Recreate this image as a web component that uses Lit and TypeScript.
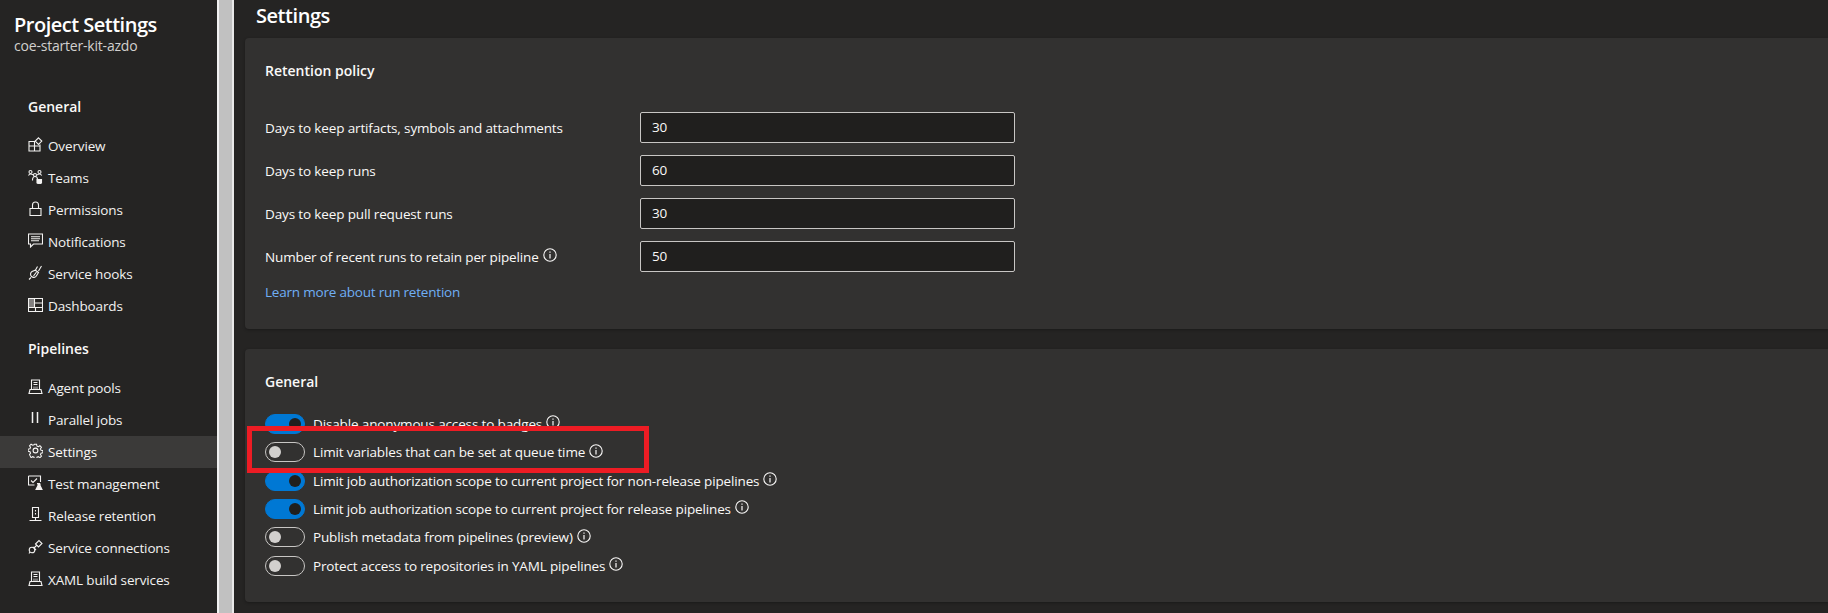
import { LitElement, html, css, svg } from "lit";
import { customElement } from "lit/decorators.js";

const icons: Record<string, unknown> = {
  overview: svg`<path d="M1 4.500h5.500v4.500H1zM1 9h5.500v5H1zM6.500 9H12v5H6.500zM6.500 5.500V9M12 7.500V9"/><path d="M10.500 .8l3.300 3.300-3.300 3.300-3.300-3.300z"/>`,
  teams: svg`<circle cx="2.500" cy="3" r="1.500"/><circle cx="11.500" cy="3" r="1.500"/><circle cx="7" cy="6" r="1.500"/><path d="M.5 6.500c.5-1 1-1.500 2-1.500s2 .5 3 1M9 6c.8-.5 1.500-1 2.500-1s1.600.5 2.200 1.500M4.500 11.500c0-2 1-4 2.500-4s2.500 1.500 2.500 3"/><path d="M9 10.500h4.500V14l-2.200 1L9 14z" fill="currentColor"/>`,
  lock: svg`<path d="M2 7.500h11v7H2zM4.500 7.500V4a3 3 0 0 1 6 0v3.500"/>`,
  chat: svg`<path d="M.5 1h14v10H5.500l-3 3v-3h-2z"/><path d="M3 3.800h9M3 5.800h9M3 7.800h8"/>`,
  hook: svg`<path d="M4 6.500a3.200 3.200 0 1 0 4.500 4.300l2-3.300-3.200-2.300z"/><path d="M1 14.500l2-2M10.500 6l3-5M7.500 5l2-3.500M5.500 11l3-4"/>`,
  dash: svg`<path d="M.5 1.500h14v13H.5zM6.500 1.500v9M.5 10.500h14M7.500 10.500v4M6.500 6h8"/><path d="M1 2h5.500v8.500H1z" fill="currentColor" fill-opacity=".45" stroke="none"/>`,
  agent: svg`<path d="M3.500 1h8v9.500h-8zM5.500 3.500h4M5.500 5.500h4M1 14.500l1-4h11l1 4z"/><path d="M5 7.500h5v3H5z" fill="currentColor" fill-opacity=".4" stroke="none"/>`,
  parallel: svg`<path d="M4.500 1v11M9.500 1v11" stroke-width="1.500"/>`,
  gear: svg`<circle cx="7.500" cy="7.500" r="2.400"/><path d="M6.300.8h2.400l.4 2 1.500.6 1.700-1.100 1.700 1.700-1.100 1.700.6 1.500 2 .4v2.400l-2 .4-.6 1.500 1.100 1.700-1.700 1.700-1.700-1.100-1.500.6-.4 2H6.300l-.4-2-1.500-.6-1.700 1.100L1 12l1.100-1.700-.6-1.500-2-.4V6l2-.4.6-1.500L1 2.400 2.700.7l1.700 1.100 1.500-.6z" transform="translate(.6 .6) scale(.92)"/>`,
  test: svg`<path d="M.5 1h12v6M.5 1v9h6"/><path d="M3 5.500l2 2 4-4"/><path d="M9 8.500h3M10 8.500v2L8 14.500h6l-2-4v-2" fill="currentColor"/>`,
  release: svg`<path d="M4.500 .5h6v10h-6zM7.500 3v1.500M7.500 6v1.500M1.500 13.500h12M7.500 10.500v3"/>`,
  conn: svg`<circle cx="4" cy="11" r="2.800"/><path d="M6 9l3-3M1 14.500l1-1.500"/><path d="M7.500 5l3.500-3.500 3 3L10.500 8z"/><path d="M5 8l3 3"/>`,
};

const general = [
  ["overview", "Overview"], ["teams", "Teams"], ["lock", "Permissions"],
  ["chat", "Notifications"], ["hook", "Service hooks"], ["dash", "Dashboards"],
];
const pipelines = [
  ["agent", "Agent pools"], ["parallel", "Parallel jobs"], ["gear", "Settings"],
  ["test", "Test management"], ["release", "Release retention"],
  ["conn", "Service connections"], ["agent", "XAML build services"],
];
const retention: [string, string, boolean][] = [
  ["Days to keep artifacts, symbols and attachments", "30", false],
  ["Days to keep runs", "60", false],
  ["Days to keep pull request runs", "30", false],
  ["Number of recent runs to retain per pipeline", "50", true],
];
const toggles: [string, boolean][] = [
  ["Disable anonymous access to badges", true],
  ["Limit variables that can be set at queue time", false],
  ["Limit job authorization scope to current project for non-release pipelines", true],
  ["Limit job authorization scope to current project for release pipelines", true],
  ["Publish metadata from pipelines (preview)", false],
  ["Protect access to repositories in YAML pipelines", false],
];

const info = html`<svg class="info" viewBox="0 0 14 14" width="14" height="14" aria-hidden="true"><circle cx="7" cy="7" r="6.200" fill="none" stroke="currentColor" stroke-width="1.100"/><path d="M7 3.400v1.400M7 6v4.600" stroke="currentColor" stroke-width="1.200" fill="none"/></svg>`;

@customElement("app-root")
export class AppRoot extends LitElement {
  static styles = css`
    :host {
      display: block;
      width: 1828px;
      height: 613px;
      overflow: hidden;
      background: #252423;
      color: #faf9f8;
      font-family: "Open Sans", "Noto Sans", sans-serif;
      font-size: 13.5px;
      letter-spacing: -0.14px;
    }
    .app { display: flex; height: 613px; }
    .side { width: 217px; flex: none; background: #252423; }
    .head { padding: 12px 0 0 14px; height: 80px; box-sizing: border-box; }
    .head h1 { margin: 0; font-size: 20px; line-height: 25px; font-weight: 600; color: #fff; letter-spacing: -0.5px; }
    .head p { margin: 0; font-size: 14px; line-height: 18px; color: #d2d0ce; letter-spacing: -0.2px; }
    .group { margin: 0; padding: 13px 0 0; }
    .group h2 { margin: 0 0 9px 28px; font-size: 14px; line-height: 28px; font-weight: 600; color: #faf9f8; letter-spacing: 0; }
    .nav { height: 32px; display: flex; align-items: center; padding-left: 28px; gap: 5px; color: #f3f2f1; }
    .nav.on { background: #3b3a39; color: #faf9f8; }
    .nav svg { width: 15px; height: 15px; flex: none; fill: none; stroke: currentColor; stroke-width: 1.100; margin-top: -4px; }
    .scroll { width: 17px; flex: none; box-sizing: border-box; background: #c1c1c1; border-left: 2px solid #f1f1f1; border-right: 2px solid #e8e8e8; }
    .main { flex: 1; min-width: 0; padding-left: 11px; display: flex; flex-direction: column; }
    .title { margin: 0 0 0 11px; height: 38px; box-sizing: border-box; padding-top: 3px; font-size: 20px; line-height: 26px; font-weight: 600; color: #fff; letter-spacing: -0.45px; }
    .card { background: #323130; border-radius: 4px 0 0 4px; padding-left: 20px; box-shadow: 0 1px 3px rgba(0,0,0,.3); }
    .c1 { height: 291px; padding-top: 20px; box-sizing: border-box; }
    .c2 { height: 253px; margin-top: 20px; padding-top: 20px; box-sizing: border-box; position: relative; }
    h3 { margin: 0; font-size: 14px; line-height: 26px; font-weight: 600; color: #faf9f8; letter-spacing: 0; }
    .form { margin-top: 28px; display: flex; flex-direction: column; gap: 12px; }
    .row { display: flex; align-items: center; height: 31px; }
    .label { width: 375px; flex: none; display: flex; align-items: center; gap: 4px; }
    .input { width: 375px; height: 31px; box-sizing: border-box; border: 1px solid #c8c6c4; border-radius: 2px; background: #201f1e; padding-left: 11px; line-height: 29px; color: #faf9f8; }
    .link { margin-top: 10px; color: #70aff5; line-height: 20px; letter-spacing: -0.2px; }
    .toggles { margin-top: 14.6px; display: flex; flex-direction: column; }
    .t { height: 28.4px; display: flex; align-items: center; gap: 8px; }
    .sw { width: 40px; height: 20px; box-sizing: border-box; border-radius: 10px; border: 1px solid #c8c6c4; display: flex; align-items: center; padding: 0 3px; flex: none; }
    .sw i { width: 12px; height: 12px; border-radius: 50%; background: #d2d0ce; }
    .sw.on { background: #0078d4; border-color: #0078d4; justify-content: flex-end; }
    .sw.on i { background: #201f1e; }
    .info { flex: none; margin-top: -3px; color: #faf9f8; }
    .t span { display: inline-flex; align-items: center; gap: 4px; }
    .mark { position: absolute; left: 2px; top: 77px; width: 402px; height: 47px; box-sizing: border-box; border: 5px solid #ed1c24; pointer-events: none; }
  `;

  private navRow(r: string[]) {
    return html`<div class="nav ${r[1] === "Settings" ? "on" : ""}"><svg viewBox="0 0 15 15" aria-hidden="true">${icons[r[0]]}</svg><span>${r[1]}</span></div>`;
  }

  render() {
    return html`<div class="app">
      <aside class="side">
        <div class="head"><h1>Project Settings</h1><p>coe-starter-kit-azdo</p></div>
        <section class="group"><h2>General</h2>${general.map((r) => this.navRow(r))}</section>
        <section class="group"><h2>Pipelines</h2>${pipelines.map((r) => this.navRow(r))}</section>
      </aside>
      <div class="scroll"></div>
      <main class="main">
        <h1 class="title">Settings</h1>
        <section class="card c1">
          <h3>Retention policy</h3>
          <div class="form">
            ${retention.map(([l, v, i]) => html`<div class="row"><div class="label"><span>${l}</span>${i ? info : ""}</div><div class="input">${v}</div></div>`)}
          </div>
          <div class="link">Learn more about run retention</div>
        </section>
        <section class="card c2">
          <h3>General</h3>
          <div class="toggles">
            ${toggles.map(([l, on]) => html`<div class="t"><div class="sw ${on ? "on" : ""}"><i></i></div><span>${l}${info}</span></div>`)}
          </div>
          <div class="mark"></div>
        </section>
      </main>
    </div>`;
  }
}
